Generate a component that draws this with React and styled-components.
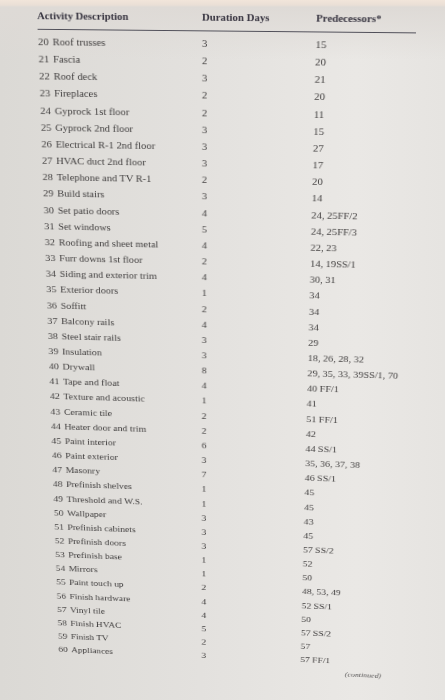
import React from 'react';
import styled, { createGlobalStyle } from 'styled-components';

const GlobalStyle = createGlobalStyle`
  html, body {
    margin: 0;
    padding: 0;
    background: #e3e1de;
  }
`;

const Page = styled.div`
  position: relative;
  width: 445px;
  height: 700px;
  overflow: hidden;
  background:
    linear-gradient(180deg, #f1e5da 0px, #eadfd6 5px, #dedad6 7px, rgba(222, 219, 215, 0) 60px),
    linear-gradient(90deg, #dbd9d5 0%, #e3e1de 45%, #eae8e5 80%, #e6e4e1 100%);
  font-family: "Liberation Serif", "DejaVu Serif", serif;
  color: #403e3e;
`;

const Sheet = styled.div`
  width: 380px;
  padding: 9px 0 0 35px;
  transform-origin: 198px 0;
  transform: perspective(845px) rotateX(-10deg) rotateY(-2.6deg);
`;

const Table = styled.div`
  display: grid;
  grid-template-columns: 167px 114px 1fr;
`;

const HeadCell = styled.div`
  font-size: 10.8px;
  font-weight: bold;
  line-height: 16px;
  color: #36333f;
  padding-bottom: 6px;
  border-bottom: 1px solid #4f4e58;
  margin-bottom: 3px;
`;

const Cell = styled.div`
  font-size: 10.9px;
  line-height: 18.15px;
  white-space: nowrap;
`;

const Num = styled.span`
  display: inline-block;
  margin-right: 4px;
`;

const Continued = styled.div`
  grid-column: 3;
  text-align: right;
  font-style: italic;
  font-size: 9px;
  line-height: 14px;
  padding: 2px 6px 0 0;
  color: #555353;
`;

const rows = [
  [20, 'Roof trusses', 3, '15'],
  [21, 'Fascia', 2, '20'],
  [22, 'Roof deck', 3, '21'],
  [23, 'Fireplaces', 2, '20'],
  [24, 'Gyprock 1st floor', 2, '11'],
  [25, 'Gyprock 2nd floor', 3, '15'],
  [26, 'Electrical R-1 2nd floor', 3, '27'],
  [27, 'HVAC duct 2nd floor', 3, '17'],
  [28, 'Telephone and TV R-1', 2, '20'],
  [29, 'Build stairs', 3, '14'],
  [30, 'Set patio doors', 4, '24, 25FF/2'],
  [31, 'Set windows', 5, '24, 25FF/3'],
  [32, 'Roofing and sheet metal', 4, '22, 23'],
  [33, 'Furr downs 1st floor', 2, '14, 19SS/1'],
  [34, 'Siding and exterior trim', 4, '30, 31'],
  [35, 'Exterior doors', 1, '34'],
  [36, 'Soffitt', 2, '34'],
  [37, 'Balcony rails', 4, '34'],
  [38, 'Steel stair rails', 3, '29'],
  [39, 'Insulation', 3, '18, 26, 28, 32'],
  [40, 'Drywall', 8, '29, 35, 33, 39SS/1, 70'],
  [41, 'Tape and float', 4, '40 FF/1'],
  [42, 'Texture and acoustic', 1, '41'],
  [43, 'Ceramic tile', 2, '51 FF/1'],
  [44, 'Heater door and trim', 2, '42'],
  [45, 'Paint interior', 6, '44 SS/1'],
  [46, 'Paint exterior', 3, '35, 36, 37, 38'],
  [47, 'Masonry', 7, '46 SS/1'],
  [48, 'Prefinish shelves', 1, '45'],
  [49, 'Threshold and W.S.', 1, '45'],
  [50, 'Wallpaper', 3, '43'],
  [51, 'Prefinish cabinets', 3, '45'],
  [52, 'Prefinish doors', 3, '57 SS/2'],
  [53, 'Prefinish base', 1, '52'],
  [54, 'Mirrors', 1, '50'],
  [55, 'Paint touch up', 2, '48, 53, 49'],
  [56, 'Finish hardware', 4, '52 SS/1'],
  [57, 'Vinyl tile', 4, '50'],
  [58, 'Finish HVAC', 5, '57 SS/2'],
  [59, 'Finish TV', 2, '57'],
  [60, 'Appliances', 3, '57 FF/1'],
];

export default function App() {
  return (
    <Page>
      <GlobalStyle />
      <Sheet>
        <Table>
          <HeadCell>Activity Description</HeadCell>
          <HeadCell>Duration Days</HeadCell>
          <HeadCell>Predecessors*</HeadCell>
          {rows.map(([id, name, days, pred]) => (
            <React.Fragment key={id}>
              <Cell><Num>{id}</Num>{name}</Cell>
              <Cell>{days}</Cell>
              <Cell>{pred}</Cell>
            </React.Fragment>
          ))}
          <Continued>(continued)</Continued>
        </Table>
      </Sheet>
    </Page>
  );
}
